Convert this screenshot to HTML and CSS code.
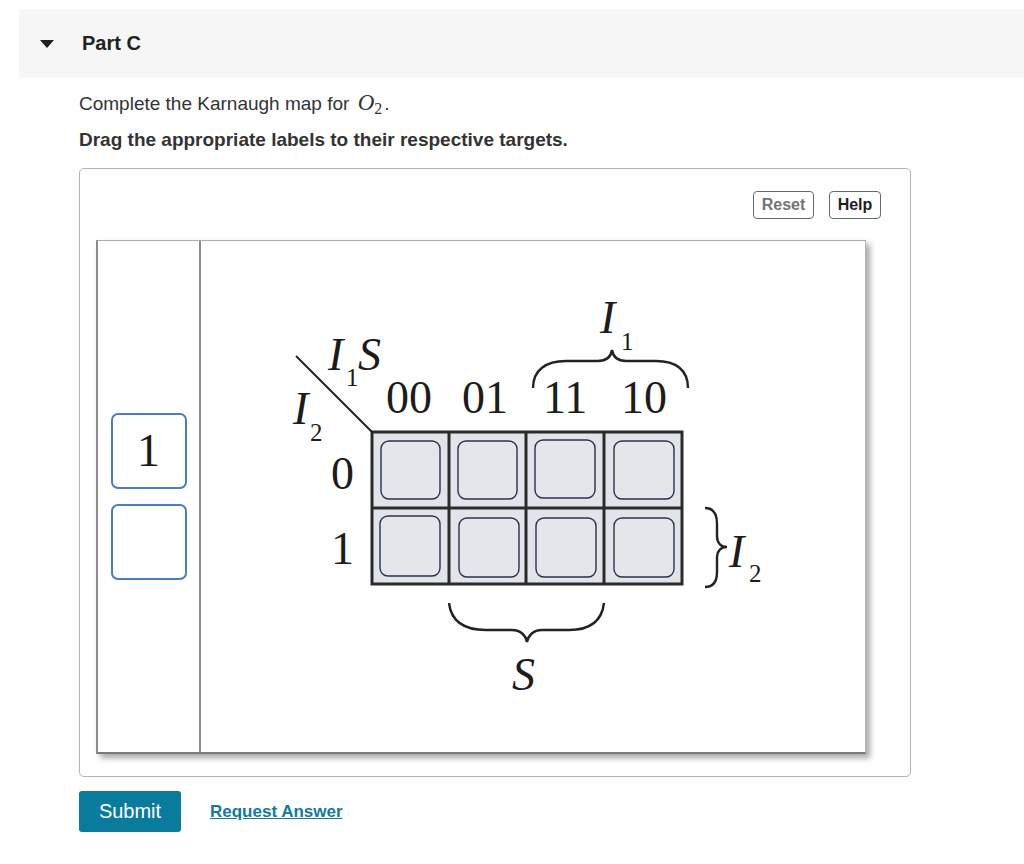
FILE: index.html
```html
<!DOCTYPE html>
<html>
<head>
<meta charset="utf-8">
<link rel="stylesheet" href="styles.css">
</head>
<body>
<div class="part-header">
  <span class="caret"></span>
  <span class="part-title">Part C</span>
</div>
<div class="content">
  <p class="prompt">Complete the Karnaugh map for <span class="math">O<sub>2</sub></span>.</p>
  <p class="instr">Drag the appropriate labels to their respective targets.</p>
  <div class="dnd-box">
    <div class="toolbar">
      <button class="tool-btn reset">Reset</button>
      <button class="tool-btn help">Help</button>
    </div>
    <div class="canvas">
      <div class="label-panel">
        <div class="label-tile">1</div>
        <div class="label-tile"></div>
      </div>
      <svg class="kmap" viewBox="201 241 664 511" width="664" height="511">
        <g class="cells">
          <rect x="372" y="432" width="310" height="152" fill="#e1e4e9"/>
          <rect x="381" y="441" width="59" height="58" rx="8" class="slot"/>
          <rect x="458" y="441" width="59" height="58" rx="8" class="slot"/>
          <rect x="535" y="440" width="60" height="58" rx="8" class="slot"/>
          <rect x="614" y="441" width="60" height="58" rx="8" class="slot"/>
          <rect x="380" y="516" width="60" height="60" rx="8" class="slot"/>
          <rect x="459" y="518" width="60" height="59" rx="8" class="slot"/>
          <rect x="536" y="518" width="60" height="59" rx="8" class="slot"/>
          <rect x="614" y="518" width="60" height="59" rx="8" class="slot"/>
        </g>
        <g class="grid" stroke="#2b2b2b" stroke-width="3" fill="none">
          <rect x="372" y="432" width="310" height="152"/>
          <line x1="372" y1="508" x2="682" y2="508"/>
          <line x1="449" y1="432" x2="449" y2="584"/>
          <line x1="526" y1="432" x2="526" y2="584"/>
          <line x1="604" y1="432" x2="604" y2="584"/>
        </g>
        <line x1="296" y1="356" x2="372" y2="432" stroke="#222" stroke-width="2"/>
        <g class="braces" stroke="#222" stroke-width="2.4" fill="none">
          <path d="M533,388 C533,370 546,361 566,361 L598,361 C607,361 611,356 612,350 C613,356 617,361 626,361 L656,361 C676,361 688,370 688,388"/>
          <path d="M449,603 C451,620 463,630 486,630 L512,630 C521,630 526,636 527,642 C528,636 533,630 542,630 L569,630 C592,630 602,620 604,603"/>
          <path d="M705,508 C713,508 717,514 717,524 L717,536 C717,543 721,547 727,547 C721,547 717,551 717,558 L717,572 C717,582 713,587 705,587"/>
        </g>
        <g class="serif">
          <text x="328" y="370" class="it big">I</text>
          <text x="346" y="386" class="sub">1</text>
          <text x="358" y="370" class="it big">S</text>
          <text x="293" y="424" class="it big">I</text>
          <text x="310" y="441" class="sub">2</text>
          <text x="386" y="413" class="big">00</text>
          <text x="462" y="413" class="big">01</text>
          <text x="543" y="413" class="big">11</text>
          <text x="621" y="413" class="big">10</text>
          <text x="600" y="333" class="it big">I</text>
          <text x="621" y="350" class="sub">1</text>
          <text x="331" y="489" class="big">0</text>
          <text x="331" y="564" class="big">1</text>
          <text x="729" y="567" class="it big">I</text>
          <text x="749" y="582" class="sub">2</text>
          <text x="512" y="690" class="it big">S</text>
        </g>
      </svg>
    </div>
  </div>
  <div class="actions">
    <button class="submit">Submit</button>
    <a class="request" href="#">Request Answer</a>
  </div>
</div>
</body>
</html>
```
FILE: styles.css
```css
html, body {
  margin: 0;
  padding: 0;
  background: #ffffff;
}
body {
  font-family: "Liberation Sans", Arial, sans-serif;
  color: #333333;
}
.part-header {
  margin: 9px 0 0 19px;
  height: 68px;
  background: #f6f6f6;
  display: flex;
  align-items: center;
  padding-left: 21px;
}
.caret {
  width: 0;
  height: 0;
  border-left: 7px solid transparent;
  border-right: 7px solid transparent;
  border-top: 8px solid #1f1f1f;
  margin-right: 28px;
  margin-top: 1px;
}
.part-title {
  font-size: 20px;
  font-weight: bold;
  color: #222222;
}
.content {
  margin-left: 79px;
  width: 832px;
}
.prompt {
  margin: 16px 0 0 0;
  font-size: 19px;
  line-height: 22px;
  height: 22px;
}
.math {
  font-family: "Liberation Serif", "Times New Roman", serif;
  font-style: italic;
  font-size: 23px;
  line-height: 0;
  margin-left: 3px;
}
.math sub {
  font-style: normal;
  font-size: 16px;
  line-height: 0;
  vertical-align: -4px;
  margin-right: 2px;
}
.instr {
  margin: 14px 0 0 0;
  font-size: 19px;
  line-height: 22px;
  font-weight: bold;
}
.dnd-box {
  margin-top: 17px;
  border: 1px solid #b4b4b4;
  border-radius: 5px;
  padding: 22px 44px 21px 16px;
  height: 564px;
}
.toolbar {
  display: flex;
  justify-content: flex-end;
  gap: 15px;
  margin-right: -15px;
  height: 28px;
}
.tool-btn {
  font-family: "Liberation Sans", Arial, sans-serif;
  font-size: 16px;
  font-weight: bold;
  background: #ffffff;
  border: 1.5px solid #5f6c75;
  border-radius: 4px;
  height: 28px;
  padding: 0 6px;
}
.reset { color: #737373; width: 61px; }
.help { color: #1e1e1e; width: 52px; }
.canvas {
  margin-top: 21px;
  display: flex;
  height: 511px;
  border-top: 1px solid #ababab;
  border-left: 2px solid #8c8c8c;
  border-right: 1px solid #b8b8b8;
  border-bottom: 2px solid #7a7a7a;
  box-shadow: 4px 4px 6px rgba(0, 0, 0, 0.35);
  background: #ffffff;
}
.label-panel {
  width: 101px;
  border-right: 2px solid #8c8c8c;
  display: flex;
  flex-direction: column;
  align-items: center;
  justify-content: center;
  gap: 15px;
}
.label-tile {
  width: 72px;
  height: 72px;
  border: 2px solid #4c7cc4;
  border-radius: 7px;
  display: flex;
  align-items: center;
  justify-content: center;
  font-family: "Liberation Serif", "Times New Roman", serif;
  font-size: 46px;
  color: #1a1a1a;
  line-height: 1;
}
.kmap {
  display: block;
}
.slot {
  fill: #e4e6ea;
  stroke: #2c3150;
  stroke-width: 1.4;
}
.serif text {
  font-family: "Liberation Serif", "Times New Roman", serif;
  fill: #1c1c1c;
}
.big { font-size: 46px; }
.it { font-style: italic; }
.sub { font-size: 25px; }
.actions {
  margin-top: 14px;
  display: flex;
  align-items: center;
  gap: 29px;
}
.submit {
  width: 102px;
  height: 41px;
  background: #097b9c;
  color: #ffffff;
  border: none;
  border-radius: 3px;
  font-family: "Liberation Sans", Arial, sans-serif;
  font-size: 20px;
  padding: 0;
}
.request {
  color: #14789e;
  font-weight: bold;
  font-size: 17px;
  text-decoration: underline;
}
```
